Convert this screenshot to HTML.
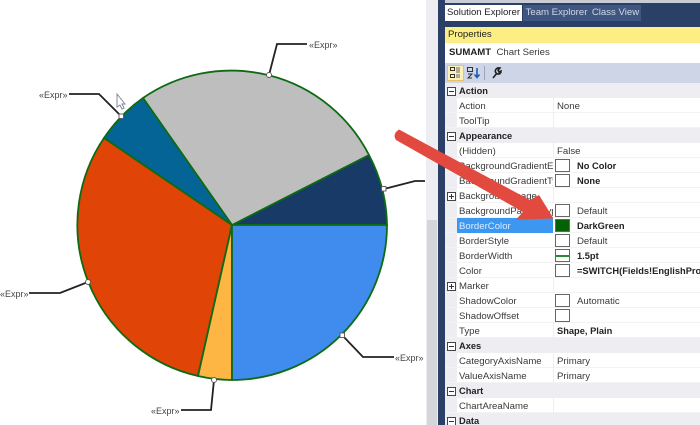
<!DOCTYPE html>
<html><head><meta charset="utf-8"><style>
html,body{margin:0;padding:0;background:#fff}
#p{position:relative;width:700px;height:425px;overflow:hidden;background:#fff;font-family:"Liberation Sans",sans-serif;font-size:9.6px;color:#3a3a3a;filter:blur(.35px)}
#p div{position:absolute}
.r{left:445px;width:255px;height:15px;line-height:17px;white-space:nowrap;overflow:hidden;background:linear-gradient(to right,#eeeef2 12px,#fff 12px);border-bottom:0;box-shadow:inset 0 -1px 0 #f3f3f5}
.cat{background:#eeeef2;font-weight:bold;color:#222;font-size:9.3px;box-shadow:none}
.n{position:absolute;left:14px;top:0;width:94px;overflow:hidden}
.cat .n{left:14px;width:200px}
.v{position:absolute;left:132px;top:0}
.v2{position:absolute;left:112px;top:0}
.s{position:absolute;left:110px;top:1px;width:13px;height:11px;border:1.2px solid #666;background:#fff}
.b{font-weight:bold;color:#222;font-size:9.3px}
.pm{position:absolute;left:2px;top:4px;width:7px;height:7px;border:1px solid #444;background:#fff}
.pm:before{content:"";position:absolute;left:1px;top:3px;width:5px;height:1px;background:#333}
.plus:after{content:"";position:absolute;left:3px;top:1px;width:1px;height:5px;background:#333}
.ln{position:absolute;left:108px;top:0;width:1px;height:15px;background:#eee}
</style></head><body><div id="p">
<svg width="430" height="425" style="position:absolute;left:0;top:0">
<g stroke="#0d6b12" stroke-width="1.8" stroke-linejoin="round">
<path d="M232 225L387 225A155 155 0 0 0 369 155Z" fill="#173a66"/>
<path d="M232 225L369 155A155 155 0 0 0 143 98Z" fill="#bebebe"/>
<path d="M232 225L143 98A155 155 0 0 0 104 138Z" fill="#046496"/>
<path d="M232 225L104 138A155 155 0 0 0 198 376Z" fill="#e04406"/>
<path d="M232 225L198 376A155 155 0 0 0 232 380Z" fill="#fdb544"/>
<path d="M232 225L232 380A155 155 0 0 0 387 225Z" fill="#3f8bee"/>
</g>
<g fill="none" stroke="#222" stroke-width="1.8">
<path d="M269 75L277 44H307"/>
<path d="M121 116L99 94H69"/>
<path d="M88 282L60 293H29"/>
<path d="M214 380L211 410H181"/>
<path d="M342 335L363 357H394"/>
<path d="M384 189L415 181H425"/>
</g>
<g fill="#fff" stroke="#555" stroke-width="0.9">
<circle cx="269" cy="75" r="2.5"/><rect x="119" y="114" width="4.5" height="4.5"/><circle cx="88" cy="282" r="2.5"/><circle cx="214" cy="380" r="2.5"/><rect x="340" y="333" width="4.5" height="4.5"/><rect x="381.5" y="186.5" width="4.5" height="4.5"/>
</g>
<g font-family="Liberation Sans" font-size="9" fill="#444">
<text x="309" y="48">«Expr»</text><text x="39" y="98">«Expr»</text><text x="0" y="297">«Expr»</text><text x="151" y="414">«Expr»</text><text x="395" y="361">«Expr»</text>
</g>
<path d="M117 94L117 107L120 105L122 109L124 108L122 104L125 104Z" fill="#fff" stroke="#7a7f8a" stroke-width="0.9"/>
</svg>

<div style="left:426px;top:0;width:12px;height:425px;background:#eeeef2"></div>
<div style="left:427px;top:220px;width:10px;height:205px;background:#d5d6da"></div>
<div style="left:438px;top:0;width:262px;height:425px;background:#2b4067"></div>
<div style="left:445px;top:0;width:255px;height:3px;background:#c9ccd4"></div>
<div style="left:445px;top:5px;width:77px;height:16px;background:#fff;color:#222;line-height:16px;text-align:center;white-space:nowrap">Solution Explorer</div>
<div style="left:523px;top:5px;width:67px;height:16px;background:#3f5680;color:#cfd8e8;line-height:16px;text-align:center;white-space:nowrap">Team Explorer</div>
<div style="left:590px;top:5px;width:51px;height:16px;background:#3f5680;color:#cfd8e8;line-height:16px;text-align:center;white-space:nowrap">Class View</div>
<div style="left:445px;top:27px;width:255px;height:16px;background:#fcee83;color:#222;line-height:16px;text-indent:3px">Properties</div>
<div style="left:445px;top:43px;width:255px;height:20px;background:#fff;line-height:20px;text-indent:4px;white-space:nowrap"><b style="color:#222">SUMAMT</b> &nbsp;Chart Series</div>
<div style="left:445px;top:63px;width:255px;height:20px;background:#cdd5e6"></div>
<div style="left:447px;top:65px;width:17px;height:16px;background:#fcf1b8;border:1px solid #e5c365;box-sizing:border-box"></div>
<svg width="60" height="20" style="position:absolute;left:445px;top:63px" fill="none">
<g stroke="#333" stroke-width="1"><rect x="5.5" y="4.5" width="4" height="3"/><rect x="5.5" y="11.5" width="4" height="3"/><path d="M11 5h4M11 7h4M11 9h4M11 12h4M11 14h4" stroke="#666"/>
<rect x="22.5" y="4.5" width="5" height="4"/><path d="M23 11h4l-4 4h4"/></g>
<path d="M32 5v9M29.5 11.5l2.5 3 2.5-3" stroke="#1a5fb4" stroke-width="1.6"/>
<path d="M39.5 3v14" stroke="#9aa5bd"/>
<path d="M48 15l4-5M51 10c-2-3 1-6 4-5l-2 2 1 2 2-1c0 3-3 4-5 2z" stroke="#222" stroke-width="1.6"/>
</svg>
<div style="left:445px;top:83px;width:255px;height:342px;background:#fff"></div>

<div class="r cat" style="top:83px"><span class="pm"></span><span class="n">Action</span></div>
<div class="r" style="top:98px"><span class="n">Action</span><span class="ln"></span><span class="v2">None</span></div>
<div class="r" style="top:113px"><span class="n">ToolTip</span><span class="ln"></span></div>
<div class="r cat" style="top:128px"><span class="pm"></span><span class="n">Appearance</span></div>
<div class="r" style="top:143px"><span class="n">(Hidden)</span><span class="ln"></span><span class="v2">False</span></div>
<div class="r" style="top:158px"><span class="n">BackgroundGradientEndColor</span><span class="s"></span><span class="v b">No Color</span></div>
<div class="r" style="top:173px"><span class="n">BackgroundGradientType</span><span class="s"></span><span class="v b">None</span></div>
<div class="r" style="top:188px"><span class="pm plus"></span><span class="n">BackgroundImage</span><span class="ln"></span></div>
<div class="r" style="top:203px"><span class="n">BackgroundPatternType</span><span class="s"></span><span class="v">Default</span></div>
<div class="r" style="top:218px"><span style="position:absolute;left:12px;top:0;width:96px;height:15px;background:#3c97f0"></span><span class="n" style="color:#dcecff">BorderColor</span><span class="s" style="background:#056105"></span><span class="v b">DarkGreen</span></div>
<div class="r" style="top:233px"><span class="n">BorderStyle</span><span class="s"></span><span class="v">Default</span></div>
<div class="r" style="top:248px"><span class="n">BorderWidth</span><span class="s"><span style="position:absolute;left:0;top:5px;width:13px;height:1.6px;background:#2c8a30"></span></span><span class="v b">1.5pt</span></div>
<div class="r" style="top:263px"><span class="n">Color</span><span class="s"></span><span class="v b">=SWITCH(Fields!EnglishProductCategoryName.Value</span></div>
<div class="r" style="top:278px"><span class="pm plus"></span><span class="n">Marker</span><span class="ln"></span></div>
<div class="r" style="top:293px"><span class="n">ShadowColor</span><span class="s"></span><span class="v">Automatic</span></div>
<div class="r" style="top:308px"><span class="n">ShadowOffset</span><span class="s"></span></div>
<div class="r" style="top:323px"><span class="n">Type</span><span class="ln"></span><span class="v2 b">Shape, Plain</span></div>
<div class="r cat" style="top:338px"><span class="pm"></span><span class="n">Axes</span></div>
<div class="r" style="top:353px"><span class="n">CategoryAxisName</span><span class="ln"></span><span class="v2">Primary</span></div>
<div class="r" style="top:368px"><span class="n">ValueAxisName</span><span class="ln"></span><span class="v2">Primary</span></div>
<div class="r cat" style="top:383px"><span class="pm"></span><span class="n">Chart</span></div>
<div class="r" style="top:398px"><span class="n">ChartAreaName</span><span class="ln"></span></div>
<div class="r cat" style="top:413px"><span class="pm"></span><span class="n">Data</span></div>

<svg width="700" height="425" style="position:absolute;left:0;top:0">
<path d="M399 129.5L530 200L539 195L553.5 218.5L516 219.5L523 212L396 140Q392 134 399 129.5Z" fill="#e2493f"/>
</svg>
</div></body></html>
